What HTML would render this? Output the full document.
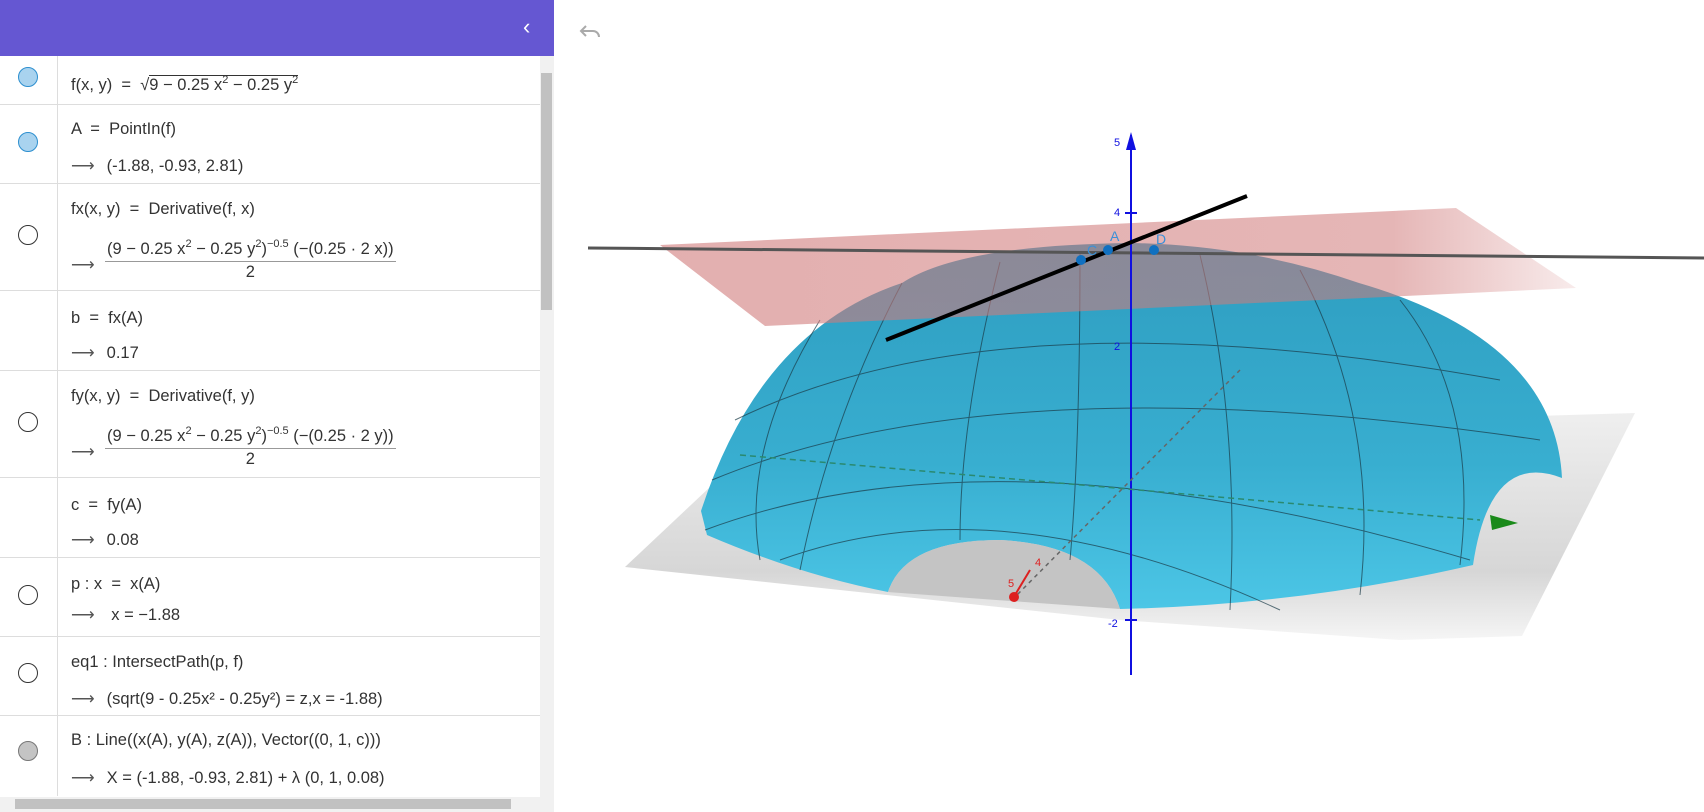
<!DOCTYPE html>
<html><head><meta charset="utf-8"><style>
*{margin:0;padding:0;box-sizing:border-box}
body{width:1704px;height:812px;overflow:hidden;background:#fff;font-family:"Liberation Sans",sans-serif;color:#333;position:relative}
#panel{position:absolute;left:0;top:0;width:554px;height:812px;background:#fff;border-right:1px solid #ddd}
#hdr{position:absolute;left:0;top:0;width:554px;height:56px;background:#6557d2}
.row{position:absolute;left:0;width:540px;border-bottom:1px solid #ddd}
.col{position:absolute;left:57px;top:56px;width:1px;height:740px;background:#ddd}
.t{position:absolute;left:71px;font-size:16.5px;white-space:nowrap;line-height:20px}
.c{position:absolute;left:18px;width:20px;height:20px;border-radius:50%;border:1.3px solid #333;background:#fff}
.c.b{background:#a9d3ef;border-color:#2d8fcf}
.c.g{background:#c4c4c4;border-color:#777}
.ar{color:#555;margin-right:12px}
sup{font-size:11px;vertical-align:7px;line-height:0}
.fr{position:absolute;left:105px;font-size:16.5px;text-align:center;white-space:nowrap;line-height:20px}
</style></head><body>
<div id="panel">
<div id="hdr"><div style="position:absolute;left:523px;top:14px;color:#fff;font-size:22px">‹</div></div>
<div class="row" style="top:56px;height:49px"></div>
<div class="row" style="top:104px;height:80px"></div>
<div class="row" style="top:183px;height:108px"></div>
<div class="row" style="top:290px;height:81px"></div>
<div class="row" style="top:370px;height:108px"></div>
<div class="row" style="top:477px;height:81px"></div>
<div class="row" style="top:557px;height:80px"></div>
<div class="row" style="top:636px;height:80px"></div>
<div class="row" style="top:715px;height:82px;border:none"></div>
<div class="col"></div>

<div class="c b" style="top:67px"></div>
<div class="t" style="top:75px">f(x, y) &nbsp;= &nbsp;√<span style="border-top:1px solid #333">9 − 0.25 x<sup>2</sup> − 0.25 y<sup>2</sup></span></div>

<div class="c b" style="top:132px"></div>
<div class="t" style="top:119px">A &nbsp;= &nbsp;PointIn(f)</div>
<div class="t" style="top:156px"><span class="ar">⟶</span>(-1.88, -0.93, 2.81)</div>

<div class="c" style="top:225px"></div>
<div class="t" style="top:199px">fx(x, y) &nbsp;= &nbsp;Derivative(f, x)</div>
<div class="t" style="top:255px"><span class="ar">⟶</span></div>
<div class="fr" style="top:239px"><div style="border-bottom:1.5px solid #999;padding:0 2px 2px">(9 − 0.25 x<sup>2</sup> − 0.25 y<sup>2</sup>)<sup>−0.5</sup> (−(0.25 · 2 x))</div><div>2</div></div>

<div class="t" style="top:308px">b &nbsp;= &nbsp;fx(A)</div>
<div class="t" style="top:343px"><span class="ar">⟶</span>0.17</div>

<div class="c" style="top:412px"></div>
<div class="t" style="top:386px">fy(x, y) &nbsp;= &nbsp;Derivative(f, y)</div>
<div class="t" style="top:442px"><span class="ar">⟶</span></div>
<div class="fr" style="top:426px"><div style="border-bottom:1.5px solid #999;padding:0 2px 2px">(9 − 0.25 x<sup>2</sup> − 0.25 y<sup>2</sup>)<sup>−0.5</sup> (−(0.25 · 2 y))</div><div>2</div></div>

<div class="t" style="top:495px">c &nbsp;= &nbsp;fy(A)</div>
<div class="t" style="top:530px"><span class="ar">⟶</span>0.08</div>

<div class="c" style="top:585px"></div>
<div class="t" style="top:574px">p : x &nbsp;= &nbsp;x(A)</div>
<div class="t" style="top:605px"><span class="ar">⟶</span>&nbsp;x = −1.88</div>

<div class="c" style="top:663px"></div>
<div class="t" style="top:652px">eq1 : IntersectPath(p, f)</div>
<div class="t" style="top:689px"><span class="ar">⟶</span>(sqrt(9 - 0.25x² - 0.25y²) = z,x = -1.88)</div>

<div class="c g" style="top:741px"></div>
<div class="t" style="top:730px">B : Line((x(A), y(A), z(A)), Vector((0, 1, c)))</div>
<div class="t" style="top:768px"><span class="ar">⟶</span>X = (-1.88, -0.93, 2.81) + λ (0, 1, 0.08)</div>

<div style="position:absolute;left:540px;top:56px;width:14px;height:741px;background:#f1f1f1"></div>
<div style="position:absolute;left:541px;top:73px;width:11px;height:237px;background:#c1c1c1"></div>
<div style="position:absolute;left:0;top:797px;width:554px;height:15px;background:#f1f1f1"></div>
<div style="position:absolute;left:15px;top:799px;width:496px;height:10px;background:#c1c1c1"></div>
</div>

<svg style="position:absolute;left:0;top:0" width="1704" height="812" viewBox="0 0 1704 812">
<defs>
<linearGradient id="rp" x1="0" y1="0" x2="1" y2="0"><stop offset="0" stop-color="#d07a7a" stop-opacity=".6"/><stop offset=".8" stop-color="#d07a7a" stop-opacity=".55"/><stop offset="1" stop-color="#d07a7a" stop-opacity=".15"/></linearGradient>
<linearGradient id="fl" x1="0" y1="0" x2="0" y2="1"><stop offset="0" stop-color="#ececec"/><stop offset=".7" stop-color="#cfcfcf"/><stop offset="1" stop-color="#f4f4f4"/></linearGradient>
<linearGradient id="dm" x1="0" y1="0" x2="0" y2="1"><stop offset="0" stop-color="#2e9dc0"/><stop offset=".6" stop-color="#38aed0"/><stop offset="1" stop-color="#4cc6e6"/></linearGradient>
</defs>
<path d="M586 26 l-5 5 5 5 M581 31 h12 a6 6 0 0 1 6 6" fill="none" stroke="#aaa" stroke-width="2"/>
<polygon points="625,567 760,440 1635,413 1522,636 1400,640 1120,620" fill="url(#fl)" opacity=".85"/>
<path d="M707,535 Q800,575 888,592 Q905,540 1000,540 Q1100,545 1120,609 Q1300,605 1473,565 Q1490,450 1562,478 Q1555,340 1359,283 Q1250,245 1131,243 Q960,245 902,283 Q760,330 701,511 Z" fill="url(#dm)"/>
<path d="M888,592 Q905,540 1000,540 Q1100,545 1120,609 Z" fill="#c4c4c4"/>
<g fill="none" stroke="#1a3b48" stroke-width="1" opacity=".7">
<path d="M735,420 Q1000,290 1500,380"/><path d="M712,480 Q1000,360 1540,440"/><path d="M705,530 Q1000,420 1470,560"/><path d="M780,560 Q1000,480 1280,610"/>
<path d="M902,283 Q830,420 800,570"/><path d="M1000,262 Q960,420 960,540"/><path d="M1080,252 Q1080,450 1070,560"/><path d="M1200,255 Q1240,420 1230,610"/><path d="M1300,270 Q1380,420 1360,595"/><path d="M1400,300 Q1480,400 1460,565"/><path d="M820,320 Q740,450 760,560"/>
</g>
<polygon points="660,245 1456,208 1576,288 765,326" fill="url(#rp)"/>
<line x1="588" y1="248" x2="1704" y2="258" stroke="#555" stroke-width="3"/>
<line x1="1131" y1="135" x2="1131" y2="675" stroke="#1010e0" stroke-width="2"/>
<polygon points="1131,132 1126,150 1136,150" fill="#1010e0"/>
<line x1="1125" y1="213" x2="1137" y2="213" stroke="#1010e0" stroke-width="2"/>
<line x1="1125" y1="620" x2="1137" y2="620" stroke="#1010e0" stroke-width="2"/>
<text x="1114" y="146" font-size="11" fill="#1010e0">5</text><text x="1114" y="216" font-size="11" fill="#1010e0">4</text><text x="1114" y="350" font-size="11" fill="#1010e0">2</text><text x="1108" y="627" font-size="11" fill="#1010e0">-2</text>
<line x1="740" y1="455" x2="1480" y2="520" stroke="#2a8a70" stroke-width="1.5" stroke-dasharray="6,4"/>
<polygon points="1518,523 1490,515 1492,530" fill="#1a8a1a"/>
<line x1="1012" y1="600" x2="1240" y2="370" stroke="#666" stroke-width="1.5" stroke-dasharray="4,4"/>
<line x1="1030" y1="570" x2="1012" y2="600" stroke="#dd2020" stroke-width="2"/>
<circle cx="1014" cy="597" r="5" fill="#dd2020"/><text x="1008" y="587" font-size="11" fill="#dd2020">5</text><text x="1035" y="566" font-size="11" fill="#dd2020">4</text>
<line x1="886" y1="340" x2="1247" y2="196" stroke="#000" stroke-width="4"/>
<circle cx="1081" cy="260" r="5" fill="#1070c0"/><circle cx="1108" cy="250" r="5" fill="#1070c0"/><circle cx="1154" cy="250" r="5" fill="#1070c0"/>
<text x="1087" y="255" font-size="14" fill="#3a90d8">C</text><text x="1110" y="241" font-size="14" fill="#3a90d8">A</text><text x="1156" y="244" font-size="14" fill="#3a90d8">D</text>
</svg>
</body></html>
